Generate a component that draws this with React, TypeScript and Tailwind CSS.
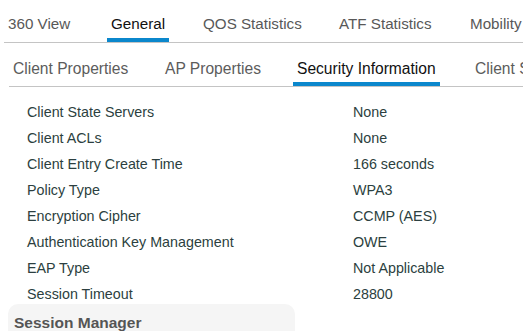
const TOP_TABS = [
  { label: '360 View', w: 'w-[103px]' },
  { label: 'General', w: 'w-[92px]', active: true },
  { label: 'QOS Statistics', w: 'w-[136px]' },
  { label: 'ATF Statistics', w: 'w-[131px]' },
  { label: 'Mobility History', w: 'w-[120px]' },
];

const SUB_TABS = [
  { label: 'Client Properties', w: 'w-[152px]' },
  { label: 'AP Properties', w: 'w-[132px]' },
  { label: 'Security Information', w: 'w-[178px]', active: true },
  { label: 'Client Statistics', w: 'w-[140px]' },
];

const ROWS: [string, string][] = [
  ['Client State Servers', 'None'],
  ['Client ACLs', 'None'],
  ['Client Entry Create Time', '166 seconds'],
  ['Policy Type', 'WPA3'],
  ['Encryption Cipher', 'CCMP (AES)'],
  ['Authentication Key Management', 'OWE'],
  ['EAP Type', 'Not Applicable'],
  ['Session Timeout', '28800'],
];

export default function App() {
  return (
    <div className="w-[523px] h-[331px] overflow-hidden bg-white font-['Liberation_Sans',Arial,sans-serif]">
      {/* Top tabs */}
      <div className="ml-[4px] flex border-b border-[#c4c4c4] whitespace-nowrap overflow-hidden">
        {TOP_TABS.map((t) => (
          <div key={t.label} className={`${t.w} shrink-0`}>
            <span
              className={`inline-block px-1 pt-[15px] pb-[5px] text-[15.2px] leading-[18px] border-b-4 ${
                t.active ? 'border-[#0b87cc] text-[#111]' : 'border-transparent text-[#585858]'
              }`}
            >
              {t.label}
            </span>
          </div>
        ))}
      </div>

      {/* Sub tabs */}
      <div className="ml-[9px] flex border-b border-[#c4c4c4] whitespace-nowrap overflow-hidden">
        {SUB_TABS.map((t) => (
          <div key={t.label} className={`${t.w} shrink-0`}>
            <span
              className={`inline-block px-1 pt-[17px] pb-[4px] text-[15.6px] leading-[18px] border-b-4 ${
                t.active ? 'border-[#0b87cc] text-[#111]' : 'border-transparent text-[#5c5c5c]'
              }`}
            >
              {t.label}
            </span>
          </div>
        ))}
      </div>

      {/* Security details */}
      <div className="pt-[12px]">
        {ROWS.map(([k, v]) => (
          <div key={k} className="flex h-[26px] text-[14.3px] leading-[26px] text-[#2c3f40]">
            <div className="w-[353px] pl-[27px]">{k}</div>
            <div>{v}</div>
          </div>
        ))}
      </div>

      <div className="-mt-[3px] ml-[8px] w-[287px] h-[40px] rounded-[10px] bg-[#f5f5f5] pl-[6px] pt-[7px]">
        <span className="text-[15.5px] leading-[18px] font-bold text-[#555]">Session Manager</span>
      </div>
    </div>
  );
}
